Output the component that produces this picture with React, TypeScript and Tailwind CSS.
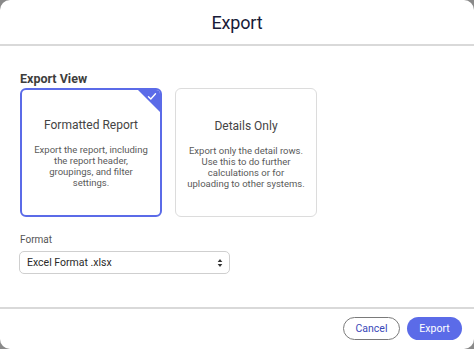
import React from "react";

export default function App() {
  return (
    <div className="w-[474px] h-[349px] bg-[#8a8a8a] relative" style={{ fontFamily: "Roboto, 'Noto Sans', sans-serif" }}>
      <div className="absolute inset-0 bg-white rounded-[10px] flex flex-col overflow-hidden">
        <div className="h-[46px] border-b-2 border-[#d9d9d9] flex items-center justify-center shrink-0">
          <span className="text-[18px] tracking-[-0.01em] text-[#181b38] pt-[1px]">Export</span>
        </div>
        <div className="flex-1 px-[20px] pt-[25px]">
          <div className="text-[12.5px] font-bold text-[#3e3e3c] leading-[16px]">Export View</div>
          <div className="flex gap-[13px] mt-[1px]">
            <div className="relative w-[142px] h-[129px] border-2 border-[#5b6be8] rounded-[6px] flex flex-col items-center pt-[27px] overflow-hidden">
              <div className="absolute right-0 top-0 w-0 h-0 border-t-[22px] border-l-[22px] border-t-[#5b6be8] border-l-transparent" />
              <svg className="absolute right-[3px] top-[2px]" width="10" height="9" viewBox="0 0 10 9">
                <path d="M1.5 4.8 L3.8 7 L8.5 1.8" stroke="white" strokeWidth="1.4" fill="none" strokeLinecap="round" strokeLinejoin="round" />
              </svg>
              <div className="text-[12px] text-[#444] leading-[16px]">Formatted Report</div>
              <div className="mt-[11px] text-[9.5px] leading-[11px] text-[#5a5a5a] text-center whitespace-nowrap">
                Export the report, including
                <br />
                the report header,
                <br />
                groupings, and filter
                <br />
                settings.
              </div>
            </div>
            <div className="w-[142px] h-[129px] border border-[#dcdcdc] rounded-[6px] flex flex-col items-center pt-[29px]">
              <div className="text-[12px] text-[#444] leading-[16px]">Details Only</div>
              <div className="mt-[11px] text-[9.5px] leading-[11px] text-[#5a5a5a] text-center whitespace-nowrap">
                Export only the detail rows.
                <br />
                Use this to do further
                <br />
                calculations or for
                <br />
                uploading to other systems.
              </div>
            </div>
          </div>
          <div className="mt-[16px] text-[10px] text-[#555] leading-[14px]">Format</div>
          <div className="mt-[4px] w-[211px] h-[23px] border border-[#cfcfcf] rounded-[5px] flex items-center justify-between pl-[7px] pr-[6px] -ml-[1px]">
            <span className="text-[10.5px] text-[#2a2a2a]">Excel Format .xlsx</span>
            <svg width="6" height="10" viewBox="0 0 6 10">
              <path d="M0.7 4 L3 1 L5.3 4 Z" fill="#333" />
              <path d="M0.7 6 L3 9 L5.3 6 Z" fill="#333" />
            </svg>
          </div>
        </div>
        <div className="h-[42px] border-t-2 border-[#d9d9d9] flex items-center justify-end gap-[7px] pr-[12px] pb-[1px] shrink-0">
          <button className="h-[23px] w-[57px] rounded-full border border-[#7a7a7a] text-[10.5px] text-[#3948b8] bg-white">Cancel</button>
          <button className="h-[23px] w-[55px] rounded-full bg-[#5b6be8] text-[10.5px] text-white">Export</button>
        </div>
      </div>
    </div>
  );
}
